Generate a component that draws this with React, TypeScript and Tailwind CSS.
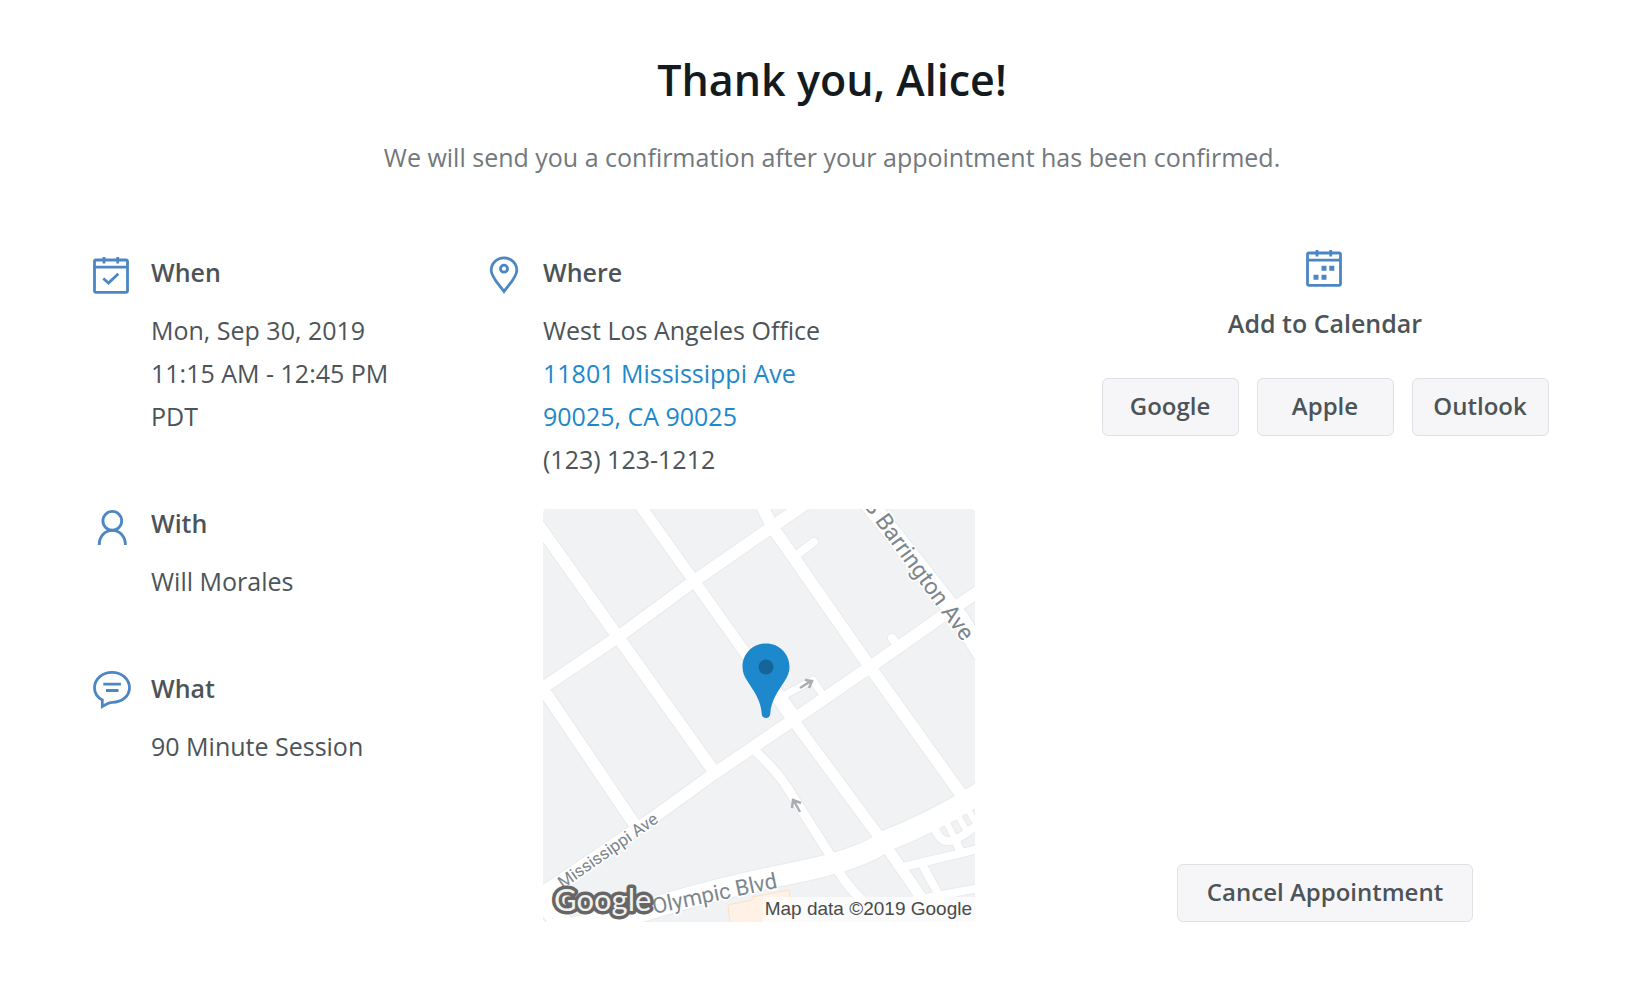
import type { ReactNode } from "react";

function Icon({ children }: { children: ReactNode }) {
  return (
    <svg
      viewBox="0 0 40 48"
      className="h-12 w-10 shrink-0"
      fill="none"
      stroke="#4c87c3"
      strokeWidth="2.8"
      aria-hidden="true"
    >
      {children}
    </svg>
  );
}

function CalendarFrame() {
  return (
    <>
      <rect x="2.5" y="9" width="33" height="32.3" rx="1.5" />
      <path d="M2.5 16.2h33M12 6v6.5M25.7 6v6.5" />
    </>
  );
}

const icons = {
  when: (
    <Icon>
      <CalendarFrame />
      <path d="M11.3 27.5l5.2 4.5 9.8-9.3" />
    </Icon>
  ),
  with: (
    <Icon>
      <circle cx="20.3" cy="18.8" r="9.4" />
      <path d="M7.2 43c0-8.4 5.6-14.6 13.1-14.6s13.1 6.2 13.1 14.6" />
    </Icon>
  ),
  what: (
    <Icon>
      <path d="M10.3 39.5v-6.6C5.5 30.3 2.5 25.8 2.5 20.7 2.5 12.2 10.2 5.4 20 5.4s17.500 6.8 17.500 15.3S29.8 35.3 20.5 35.3c-4 0-6.5 2-10.2 4.2z" />
      <path d="M11.3 17.1h17.600M14 23.5h12.500" />
    </Icon>
  ),
  where: (
    <Icon>
      <path d="M20 40.5C16 34.5 7.2 26.5 7.2 19.2a12.8 12.3 0 0 1 25.600 0C32.8 26.5 24 34.5 20 40.5z" />
      <circle cx="20" cy="17.7" r="3.5" />
    </Icon>
  ),
  add: (
    <Icon>
      <CalendarFrame />
      <path
        d="M16.5 21.8h5v5h-5zM24.3 21.8h5v5h-5zM8.5 30.7h5v5h-5zM16.5 30.7h5v5h-5z"
        fill="#4c87c3"
        stroke="none"
      />
    </Icon>
  ),
};

function Detail({
  icon,
  title,
  children,
}: {
  icon: ReactNode;
  title: string;
  children: ReactNode;
}) {
  return (
    <section className="flex items-start gap-[19px]">
      {icon}
      <div className="min-w-0 flex-1">
        <h2 className="font-semibold">{title}</h2>
        <div className="mt-[15px]">{children}</div>
      </div>
    </section>
  );
}

// Street centre lines with their widths. Each is drawn twice: casing, then fill.
const streets = [
  { d: "M-6 14L75 128 172 264", w: 12 },
  { d: "M96 -5L151 72 250 211 340 333 382 394", w: 11 },
  { d: "M218 -5L230 19 327 158 420 288", w: 12 },
  { d: "M-5 182L75 128 151 72 229 18 262 -5", w: 12 },
  { d: "M0 180L92 316", w: 12 },
  { d: "M-4 386L104 313 172 264 250 211 327 158 404 104 436 82", w: 12 },
  { d: "M324 -8L417 110 440 146", w: 18 },
  { d: "M210 240Q230 258 242 275L289 349Q298 372 322 394", w: 9 },
  { d: "M252 47L271 33", w: 8 },
  { d: "M355 137L349 129", w: 8 },
  { d: "M236 189L270 171 281 188M236 182L252 204", w: 7 },
  { d: "M360 358L436 340M380 357L398 390M372 391L436 379", w: 8 },
  { d: "M390 314Q396 334 407 332T436 314M412 330L418 344", w: 8 },
  { d: "M400 306L410 326M411 300L422 319M422 295L431 311", w: 6 },
  { d: "M-6 384L22 418M-6 426Q60 414 120 396T250 364 340 333Q394 312 440 282", w: 21 },
];

function LocationMap() {
  return (
    <svg
      viewBox="0 0 432 413"
      className="mt-7 block w-full max-w-[432px] rounded-sm"
      role="img"
      aria-label="Map of the office location"
    >
      <rect width="432" height="413" fill="#f1f2f4" />
      <path
        d="M185 396l24-5v-3l37-7 3 20-6 13h-56z"
        fill="#fff1e6"
        stroke="#fde0c5"
      />
      <g fill="none" stroke="#e8eaeb" strokeLinejoin="round" strokeLinecap="round">
        {streets.map((s) => (
          <path key={s.d} d={s.d} strokeWidth={s.w + 2} />
        ))}
      </g>
      <g fill="none" stroke="#ffffff" strokeLinejoin="round" strokeLinecap="round">
        {streets.map((s) => (
          <path key={s.d} d={s.d} strokeWidth={s.w} />
        ))}
      </g>

      {/* One-way arrows */}
      <g fill="none" stroke="#a9adb1" strokeWidth="2.500">
        <path d="M257 179l11-7M262 171l7 1-3 7" />
        <path d="M257 303l-6-11M249 299l1-8 8 3" />
      </g>

      <g
        fill="#7d868c"
        stroke="#ffffff"
        strokeWidth="3"
        paintOrder="stroke"
        className="font-[Roboto,sans-serif]"
      >
        <text transform="translate(320 -4) rotate(54)" fontSize="23">
          S Barrington Ave
        </text>
        <text transform="translate(20 380) rotate(-35)" fontSize="17">
          Mississippi Ave
        </text>
        <text transform="translate(111 405) rotate(-12)" fontSize="22">
          Olympic Blvd
        </text>
      </g>

      {/* Marker */}
      <path
        d="M223 134.500c13.200 0 23.500 10.300 23.500 23.200 0 5.500-1.900 9.800-4.500 13.800-7 11-14 20-14.700 33 0 2.700-1.800 4.500-4.300 4.500s-4.300-1.800-4.300-4.500c-.7-13-7.700-22-14.700-33-2.600-4-4.500-8.300-4.500-13.800 0-12.900 10.300-23.200 23.500-23.200z"
        fill="#1e88cc"
      />
      <circle cx="223" cy="158" r="7.500" fill="#15659a" />

      <rect x="220" y="388" width="212" height="25" fill="#ffffff" fillOpacity="0.700" />
      <text
        x="429"
        y="406"
        fontSize="19"
        textAnchor="end"
        fill="#4a4a4a"
        className="font-['Liberation_Sans',sans-serif]"
      >
        Map data ©2019 Google
      </text>
      <text
        x="11"
        y="402"
        fontSize="31"
        fill="#f1f1f1"
        stroke="#666666"
        strokeWidth="7"
        strokeLinejoin="round"
        paintOrder="stroke"
        className="font-[Lato,sans-serif] font-normal"
      >
        Google
      </text>
    </svg>
  );
}

const buttonClass =
  "h-[58px] rounded-md border border-[#dfe1e6] bg-[#f6f6f9] pb-[3px] text-2xl font-semibold hover:bg-[#eeeef3]";

export default function App() {
  return (
    <main className="min-h-screen bg-white pt-[50px] pr-[78px] pb-[75px] pl-[92px] font-['Open_Sans',sans-serif] text-[25px] leading-[43px] text-[#4c5458]">
      <header className="text-center">
        <h1 className="text-[43px] leading-[60px] font-semibold text-[#141b1f]">
          Thank you, Alice!
        </h1>
        <p className="mt-[26px] text-[#72787b]">
          We will send you a confirmation after your appointment has been confirmed.
        </p>
      </header>

      <div className="mt-[65px] grid grid-cols-[392fr_594fr_494fr]">
        <div className="flex flex-col gap-16 pt-[7px]">
          <Detail icon={icons.when} title="When">
            <p>Mon, Sep 30, 2019</p>
            <p>11:15 AM - 12:45 PM</p>
            <p>PDT</p>
          </Detail>
          <Detail icon={icons.with} title="With">
            <p>Will Morales</p>
          </Detail>
          <Detail icon={icons.what} title="What">
            <p>90 Minute Session</p>
          </Detail>
        </div>

        <div className="pt-[7px]">
          <Detail icon={icons.where} title="Where">
            <p>West Los Angeles Office</p>
            <a href="#map" className="block text-[#1e88cb]">
              11801 Mississippi Ave
              <br />
              90025, CA 90025
            </a>
            <p>(123) 123-1212</p>
            <LocationMap />
          </Detail>
        </div>

        <div className="flex flex-col items-center">
          {icons.add}
          <h2 className="mt-[10px] font-semibold">Add to Calendar</h2>
          <div className="mt-[33px] flex gap-[18px]">
            {["Google", "Apple", "Outlook"].map((name) => (
              <button key={name} type="button" className={`${buttonClass} w-[137px]`}>
                {name}
              </button>
            ))}
          </div>
          <button type="button" className={`${buttonClass} mt-auto w-[296px]`}>
            Cancel Appointment
          </button>
        </div>
      </div>
    </main>
  );
}
